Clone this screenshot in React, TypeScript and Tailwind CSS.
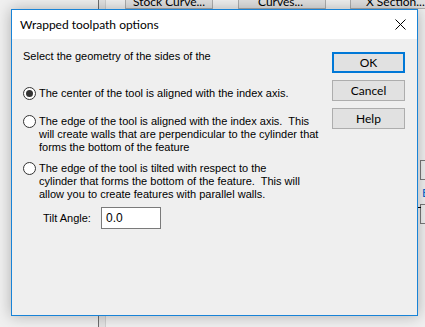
import React from "react";

const font = { fontFamily: 'Lato, "Liberation Sans", Arial, sans-serif' };
const bodyFont = { fontFamily: '"Liberation Sans", Arial, sans-serif' };

function Radio({ checked }: { checked?: boolean }) {
  return (
    <span className="flex h-[13px] w-[13px] shrink-0 items-center justify-center rounded-full border border-[#333333] bg-white">
      {checked && <span className="h-[7px] w-[7px] rounded-full bg-[#333333]" />}
    </span>
  );
}

function Btn({ label, primary }: { label: string; primary?: boolean }) {
  return (
    <div
      className={
        "flex h-[21px] w-[73px] items-center justify-center bg-[#e1e1e1] text-[12px] text-black " +
        (primary ? "border-2 border-[#0078d7]" : "border border-[#adadad]")
      }
    >
      {label}
    </div>
  );
}

export default function App() {
  return (
    <div className="relative h-[327px] w-[425px] overflow-hidden bg-[#f0f0f0]" style={font}>
      {/* background app fragments */}
      <div className="absolute left-[98px] top-0 h-[327px] w-px bg-[#6d6d6d]" />
      <div className="absolute left-[99px] top-0 h-[327px] w-[6px] bg-[#e3e3e3]" />
      <div className="absolute left-[105px] top-0 h-[327px] w-px bg-[#cfcfcf]" />
      <div className="absolute left-[125px] top-[-12px] flex h-[21px] w-[88px] items-end justify-center border border-[#adadad] bg-[#e1e1e1] text-[12px] leading-[13px] text-black">
        Stock Curve...
      </div>
      <div className="absolute left-[238px] top-[-12px] flex h-[21px] w-[88px] items-end border border-[#adadad] bg-[#e1e1e1] pl-[19px] text-[12px] leading-[13px] text-black">
        Curves...
      </div>
      <div className="absolute left-[350px] top-[-12px] flex h-[21px] w-[88px] items-end border border-[#adadad] bg-[#e1e1e1] pl-[15px] text-[12px] leading-[13px] text-black">
        X Section...
      </div>
      <div className="absolute left-[420px] top-[160px] h-[20px] w-[20px] border border-[#7a7a7a] bg-[#f0f0f0]" />
      <div className="absolute left-[422px] top-[186px] text-[12px] leading-[14px] text-[#0066cc]">E</div>
      <div className="absolute left-[420px] top-[204px] h-[20px] w-[20px] border border-[#7a7a7a] bg-[#f0f0f0]" />
      <div className="absolute left-[418px] top-[207px] h-px w-[3px] bg-black" />

      {/* dialog */}
      <div className="absolute left-[11px] top-[9px] flex h-[307px] w-[407px] flex-col border border-[#1883d7] bg-[#efefef] shadow-[0_0_14px_rgba(0,0,0,0.28)]">
        <div className="flex h-[29px] shrink-0 items-center justify-between bg-white pl-[8px] pr-[9px]">
          <span className="whitespace-nowrap text-[12px] text-black">Wrapped toolpath options</span>
          <svg width="11" height="11" viewBox="0 0 11 11" className="mr-[2px]">
            <path d="M0.5 0.5 L10.5 10.5 M10.5 0.5 L0.5 10.5" stroke="#000" strokeWidth="1" />
          </svg>
        </div>
        <div className="flex flex-1 flex-row text-[11px] leading-[13px] text-black">
          <div className="flex min-w-0 flex-1 flex-col whitespace-nowrap pl-[11px] pt-[11px]" style={bodyFont}>
            <div>Select the geometry of the sides of the</div>
            <div className="mt-[24px] flex items-start gap-[3px]">
              <Radio checked />
              <div>The center of the tool is aligned with the index axis.</div>
            </div>
            <div className="mt-[15px] flex items-start gap-[3px]">
              <Radio />
              <div>
                The edge of the tool is aligned with the index axis.&nbsp; This
                <br />
                will create walls that are perpendicular to the cylinder that
                <br />
                forms the bottom of the feature
              </div>
            </div>
            <div className="mt-[8px] flex items-start gap-[3px]">
              <Radio />
              <div>
                The edge of the tool is tilted with respect to the
                <br />
                cylinder that forms the bottom of the feature.&nbsp; This will
                <br />
                allow you to create features with parallel walls.
              </div>
            </div>
            <div className="mt-[6px] flex items-center">
              <span className="ml-[20px] w-[58px]">Tilt Angle:</span>
              <div className="flex h-[22px] w-[60px] items-center border-l border-t border-[#7a7a7a] bg-white pl-[4px] text-[12px] shadow-[inset_0_-1px_0_#7a7a7a,inset_-1px_0_0_#7a7a7a]">
                0.0
              </div>
            </div>
          </div>
          <div className="mr-[12px] flex w-[73px] shrink-0 flex-col gap-[7px] pt-[13px]">
            <Btn label="OK" primary />
            <Btn label="Cancel" />
            <Btn label="Help" />
          </div>
        </div>
      </div>
    </div>
  );
}
